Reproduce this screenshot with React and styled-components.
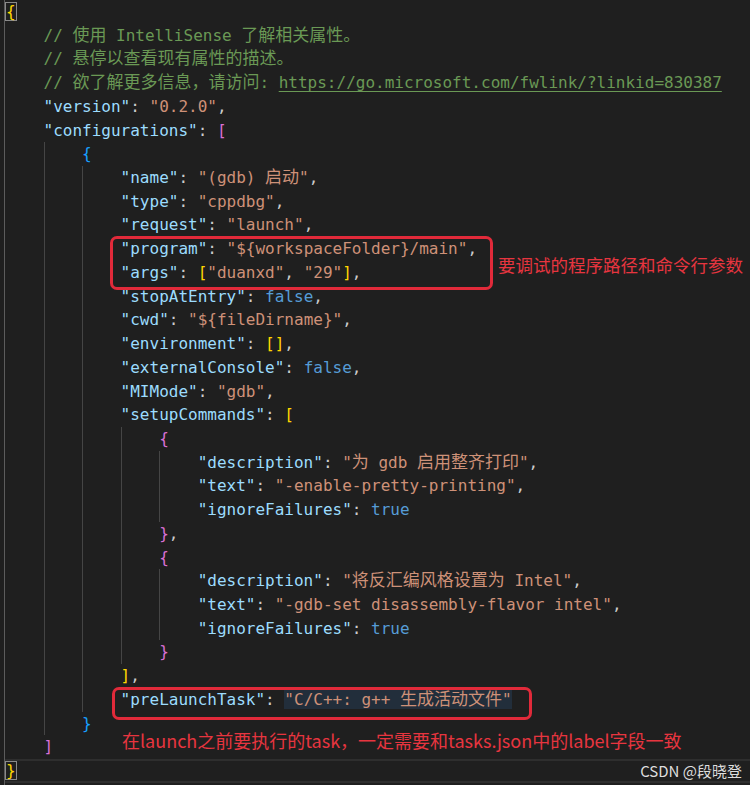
import React from 'react'
import styled, { createGlobalStyle } from 'styled-components'

const GlobalStyle = createGlobalStyle`
    html, body {
        margin: 0;
        padding: 0;
        background: #1f1f1f;
    }
`

const Editor = styled.div`
    position: relative;
    width: 750px;
    height: 785px;
    background: #1f1f1f;
    overflow: hidden;
`

const Code = styled.div`
    margin-left: 4px;
    border-left: 1px solid #5c5c5c;
    min-height: 785px;
    font-family: "DejaVu Sans Mono", "Noto Sans CJK SC", monospace;
    font-size: 16px;
`

const Line = styled.div`
    display: flex;
    height: 23.72px;
    line-height: 23.72px;
    white-space: pre;
    box-sizing: border-box;
    ${p => p.$current && `
        border-top: 2px solid #2e2e2e;
        border-bottom: 2px solid #2e2e2e;
        line-height: 19.72px;
    `}
`

const Guide = styled.span`
    flex: none;
    width: 4ch;
    box-sizing: border-box;
    border-left: 1px solid ${p => (p.$show ? '#454545' : 'transparent')};
`

const Text = styled.span`
    flex: none;
`

const COLORS = {
    key: '#9cdcfe',
    str: '#ce9178',
    punc: '#cccccc',
    com: '#6a9955',
    bool: '#569cd6',
    b1: '#ffd700',
    b2: '#da70d6',
    b3: '#179fff',
}

const Token = styled.span`
    color: ${p => COLORS[p.$kind] || '#cccccc'};
    ${p => p.$link && 'text-decoration: underline; text-underline-offset: 3px;'}
    ${p => p.$selected && 'background: #222e3b;'}
`

// CJK glyphs fall back to a wider font in the editor
const Wide = styled.span`
    font-family: "Noto Sans CJK SC", sans-serif;
    font-size: 17px;
    line-height: 1;
`

const MatchBox = styled.span`
    display: inline-block;
    box-sizing: border-box;
    height: 19px;
    line-height: 17px;
    margin-top: ${p => (p.$current ? '0px' : '2px')};
    vertical-align: top;
    border: 1px solid #8a8a8a;
    color: ${p => COLORS[p.$kind]};
`

const Callout = styled.div`
    position: absolute;
    left: ${p => p.$x}px;
    top: ${p => p.$y}px;
    width: ${p => p.$w}px;
    height: ${p => p.$h}px;
    box-sizing: border-box;
    border: 3px solid #e12a3a;
    border-radius: 7px;
`

const Note = styled.div`
    position: absolute;
    left: ${p => p.$x}px;
    top: ${p => p.$y}px;
    font-family: "Noto Sans CJK SC", "Noto Sans", sans-serif;
    font-size: ${p => p.$size}px;
    color: #e7353f;
    white-space: nowrap;
    line-height: 1.2;
`

const Watermark = styled.div`
    position: absolute;
    right: 8px;
    bottom: 4px;
    font-family: "Noto Sans CJK SC", "Noto Sans", sans-serif;
    font-size: 15px;
    color: #dedede;
    line-height: 20px;
`

const k = t => ['key', `"${t}"`]
const s = t => ['str', `"${t}"`]
const p = t => ['punc', t]
const kv = (key, value, last) => [k(key), p(': '), s(value), ...(last ? [] : [p(',')])]
const kb = (key, value, last) => [k(key), p(': '), ['bool', value], ...(last ? [] : [p(',')])]

const lines = [
    { indent: 0, match: 'b1', tokens: [['b1', '{']] },
    { indent: 1, tokens: [['com', '// 使用 IntelliSense 了解相关属性。']] },
    { indent: 1, tokens: [['com', '// 悬停以查看现有属性的描述。']] },
    { indent: 1, tokens: [['com', '// 欲了解更多信息，请访问: '], ['com', 'https://go.microsoft.com/fwlink/?linkid=830387', 'link']] },
    { indent: 1, tokens: kv('version', '0.2.0') },
    { indent: 1, tokens: [k('configurations'), p(': '), ['b2', '[']] },
    { indent: 2, tokens: [['b3', '{']] },
    { indent: 3, tokens: kv('name', '(gdb) 启动') },
    { indent: 3, tokens: kv('type', 'cppdbg') },
    { indent: 3, tokens: kv('request', 'launch') },
    { indent: 3, tokens: kv('program', '${workspaceFolder}/main') },
    { indent: 3, tokens: [k('args'), p(': '), ['b1', '['], s('duanxd'), p(', '), s('29'), ['b1', ']'], p(',')] },
    { indent: 3, tokens: kb('stopAtEntry', 'false') },
    { indent: 3, tokens: kv('cwd', '${fileDirname}') },
    { indent: 3, tokens: [k('environment'), p(': '), ['b1', '[]'], p(',')] },
    { indent: 3, tokens: kb('externalConsole', 'false') },
    { indent: 3, tokens: kv('MIMode', 'gdb') },
    { indent: 3, tokens: [k('setupCommands'), p(': '), ['b1', '[']] },
    { indent: 4, tokens: [['b2', '{']] },
    { indent: 5, tokens: kv('description', '为 gdb 启用整齐打印') },
    { indent: 5, tokens: kv('text', '-enable-pretty-printing') },
    { indent: 5, tokens: kb('ignoreFailures', 'true', true) },
    { indent: 4, tokens: [['b2', '}'], p(',')] },
    { indent: 4, tokens: [['b2', '{']] },
    { indent: 5, tokens: kv('description', '将反汇编风格设置为 Intel') },
    { indent: 5, tokens: kv('text', '-gdb-set disassembly-flavor intel') },
    { indent: 5, tokens: kb('ignoreFailures', 'true', true) },
    { indent: 4, tokens: [['b2', '}']] },
    { indent: 3, tokens: [['b1', ']'], p(',')] },
    { indent: 3, tokens: [k('preLaunchTask'), p(': '), ['str', '"C/C++: g++ 生成活动文件"', 'selected']] },
    { indent: 2, tokens: [['b3', '}']] },
    { indent: 1, tokens: [['b2', ']']] },
    { indent: 0, match: 'b1', current: true, tokens: [['b1', '}']] },
]

function splitWide(value) {
    return value.split(/([\u3000-\u303f\u4e00-\u9fff\uff00-\uffef]+)/).map((part, i) =>
        i % 2 === 1 ? <Wide key={i}>{part}</Wide> : part
    )
}

function CodeLine({ line }) {
    const guides = []
    for (let i = 0; i < line.indent; i++) {
        guides.push(<Guide key={i} $show={i > 0} />)
    }
    return (
        <Line $current={line.current}>
            {guides}
            <Text>
                {line.match ? (
                    <MatchBox $kind={line.match} $current={line.current}>
                        {line.tokens[0][1]}
                    </MatchBox>
                ) : (
                    line.tokens.map(([kind, value, flag], i) => (
                        <Token
                            key={i}
                            $kind={kind}
                            $link={flag === 'link'}
                            $selected={flag === 'selected'}
                        >
                            {splitWide(value)}
                        </Token>
                    ))
                )}
            </Text>
        </Line>
    )
}

export default function App() {
    return (
        <Editor>
            <GlobalStyle />
            <Code>
                {lines.map((line, i) => (
                    <CodeLine key={i} line={line} />
                ))}
            </Code>

            <Callout $x={110} $y={236} $w={383} $h={54} />
            <Note $x={498} $y={254} $size={17.5}>要调试的程序路径和命令行参数</Note>

            <Callout $x={112} $y={687} $w={420} $h={33} />
            <Note $x={122} $y={730} $size={18}>在launch之前要执行的task，一定需要和tasks.json中的label字段一致</Note>

            <Watermark>CSDN @段晓登</Watermark>
        </Editor>
    )
}
